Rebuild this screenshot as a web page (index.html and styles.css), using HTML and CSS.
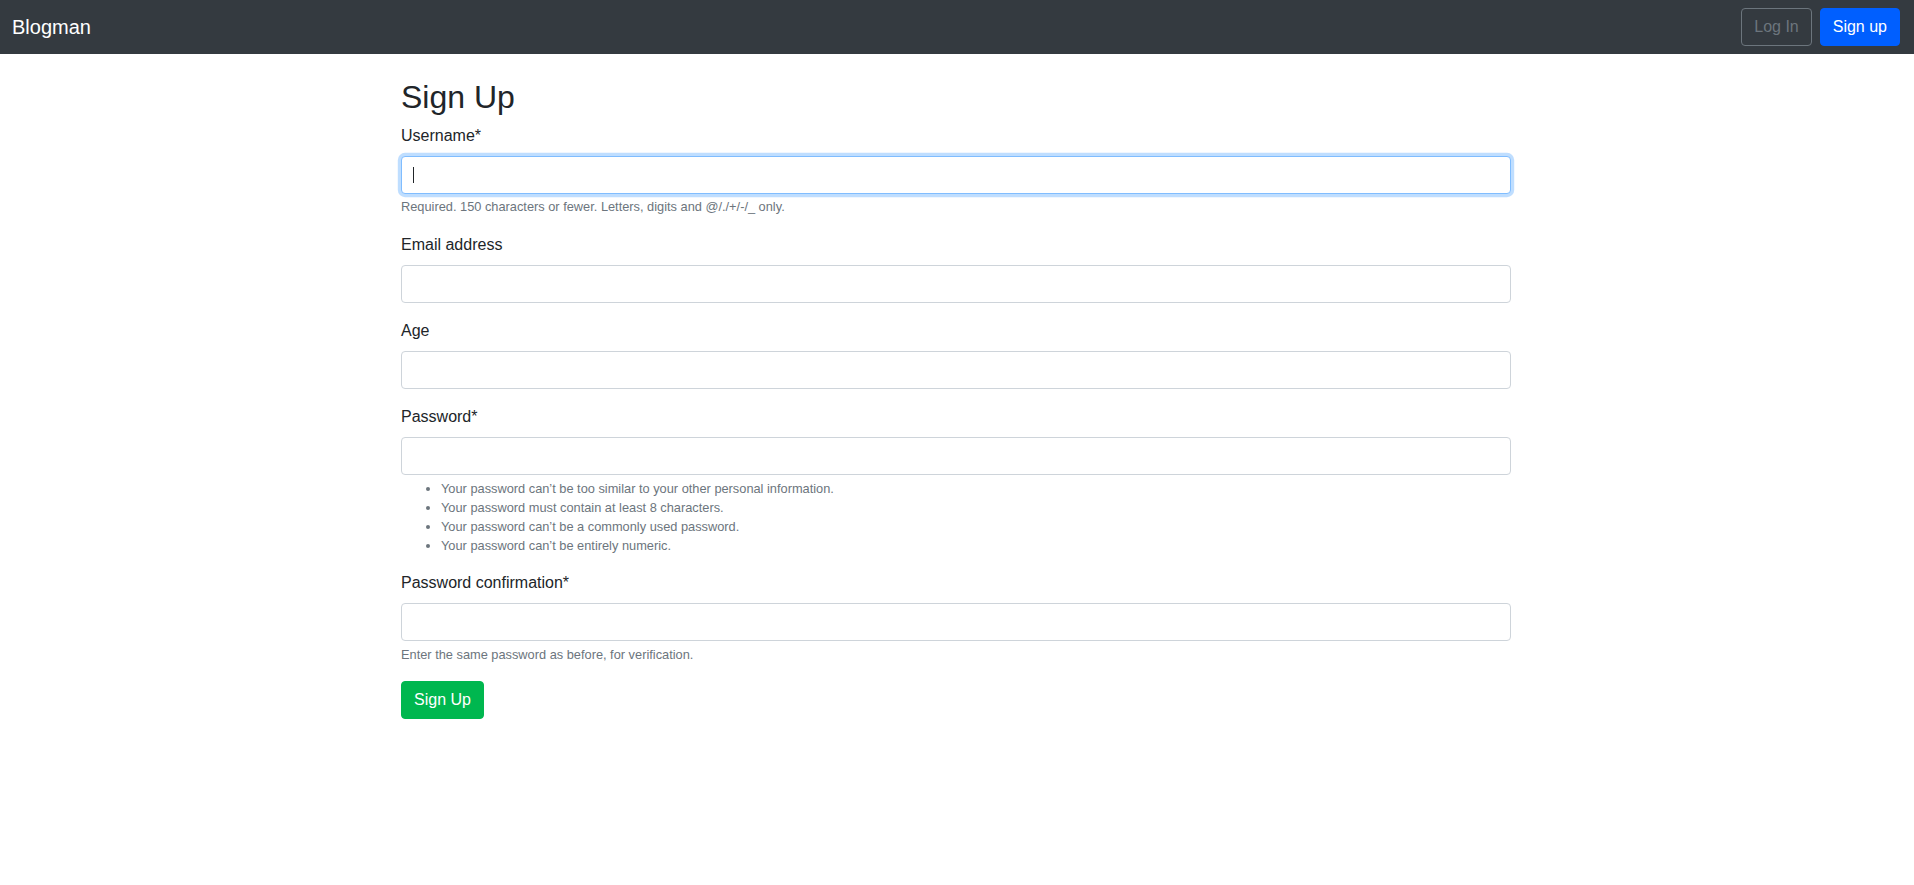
FILE: index.html
```html
<!DOCTYPE html>
<html lang="en">
<head>
<meta charset="utf-8">
<title>Sign Up - Blogman</title>
<link rel="stylesheet" href="styles.css">
</head>
<body>
<nav class="navbar">
  <a class="brand" href="#">Blogman</a>
  <div class="nav-actions">
    <a class="btn btn-outline" href="#">Log In</a>
    <a class="btn btn-primary" href="#">Sign up</a>
  </div>
</nav>
<main class="container">
  <h2 class="title">Sign Up</h2>
  <form>
    <div class="form-group">
      <label class="label" for="u">Username*</label>
      <div class="input-wrap">
        <input class="input input-focus" id="u" type="text">
        <span class="caret"></span>
      </div>
      <small class="help help-tight">Required. 150 characters or fewer. Letters, digits and @/./+/-/_ only.</small>
    </div>
    <div class="form-group">
      <label class="label" for="e">Email address</label>
      <input class="input" id="e" type="email">
    </div>
    <div class="form-group">
      <label class="label" for="a">Age</label>
      <input class="input" id="a" type="text">
    </div>
    <div class="form-group">
      <label class="label" for="p1">Password*</label>
      <input class="input" id="p1" type="password">
      <small class="help">
        <ul class="help-list">
          <li>Your password can’t be too similar to your other personal information.</li>
          <li>Your password must contain at least 8 characters.</li>
          <li>Your password can’t be a commonly used password.</li>
          <li>Your password can’t be entirely numeric.</li>
        </ul>
      </small>
    </div>
    <div class="form-group">
      <label class="label" for="p2">Password confirmation*</label>
      <input class="input" id="p2" type="password">
      <small class="help">Enter the same password as before, for verification.</small>
    </div>
    <button class="btn btn-success" type="button">Sign Up</button>
  </form>
</main>
</body>
</html>
```
FILE: styles.css
```css
* { box-sizing: border-box; }
html, body {
  margin: 0;
  padding: 0;
}
body {
  font-family: "Liberation Sans", Arial, Helvetica, sans-serif;
  font-size: 16px;
  line-height: 1.5;
  color: #212529;
  background: #fff;
}
.navbar {
  background: #343a40;
  display: flex;
  align-items: center;
  justify-content: space-between;
  padding: 8px 14px 8px 12px;
  height: 54px;
}
.brand {
  color: #fff;
  font-size: 20px;
  line-height: 30px;
  text-decoration: none;
}
.nav-actions {
  display: flex;
  gap: 8px;
}
.btn {
  display: inline-block;
  font-family: inherit;
  font-size: 16px;
  line-height: 24px;
  padding: 6px 12px;
  border: 1px solid transparent;
  border-radius: 4px;
  text-decoration: none;
  cursor: pointer;
}
.btn-outline {
  color: #6c757d;
  border-color: #6c757d;
  background: transparent;
}
.btn-primary {
  color: #fff;
  background: #005fff;
  border-color: #005fff;
}
.btn-success {
  color: #fff;
  background: #00b74f;
  border-color: #00b74f;
}
.container {
  width: 1140px;
  margin: 0 auto;
  padding: 24px 16px 0 14px;
}
.title {
  font-size: 32px;
  font-weight: 500;
  line-height: 1.2;
  margin: 0 0 8px;
}
.form-group {
  margin-bottom: 16px;
}
.label {
  display: inline-block;
  margin-bottom: 8px;
}
.input-wrap {
  position: relative;
}
.input {
  display: block;
  width: 100%;
  height: 38px;
  padding: 6px 12px;
  font-family: inherit;
  font-size: 16px;
  line-height: 24px;
  color: #495057;
  background: #fff;
  border: 1px solid #ced4da;
  border-radius: 4px;
  outline: none;
}
.input-focus {
  border-color: #80bdff;
  box-shadow: 0 0 0 3.2px rgba(0, 123, 255, 0.25);
}
.caret {
  position: absolute;
  left: 12px;
  top: 11px;
  width: 1px;
  height: 16px;
  background: #212529;
}
.help {
  display: block;
  margin-top: 4px;
  font-size: 12.8px;
  color: #6c757d;
}
.help-tight {
  margin-top: 3px;
}
.help-list {
  margin: 0 0 16px;
  padding-left: 40px;
}
```
